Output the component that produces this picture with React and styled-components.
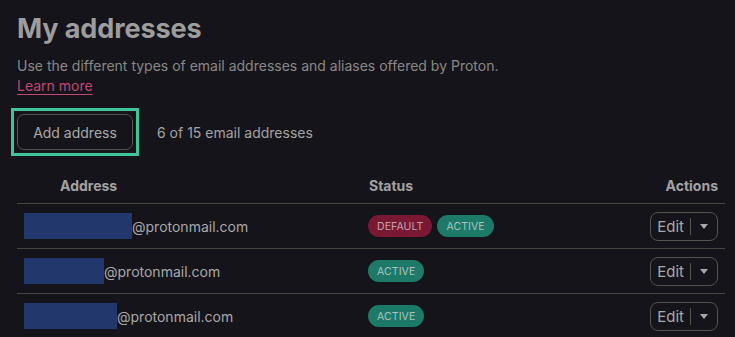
import styled, { createGlobalStyle } from 'styled-components';

const GlobalStyle = createGlobalStyle`
	html, body {
		margin: 0;
		padding: 0;
		background: #15141a;
	}
	body {
		font-family: Inter, "Noto Sans", sans-serif;
		color: #a6a6a6;
	}
`;

const Page = styled.div`
	padding: 12px 10px 0 17px;
	width: 708px;
`;

const Title = styled.h1`
	margin: 0;
	font-size: 27px;
	line-height: 34px;
	font-weight: 700;
	color: #9d9d9d;
	letter-spacing: -0.1px;
`;

const Intro = styled.p`
	margin: 10px 0 0;
	font-size: 14px;
	line-height: 20px;
	color: #8a8886;
`;

const LearnMore = styled.a`
	color: #c04a73;
	text-decoration: underline;
	text-underline-offset: 3px;
`;

const Toolbar = styled.div`
	display: flex;
	align-items: center;
	gap: 18px;
	margin: 12px 0 0 -6px;
`;

const Highlight = styled.div`
	border: 3px solid #3fc398;
	padding: 3px;
	display: flex;
`;

const Button = styled.button`
	font-family: inherit;
	font-size: 14px;
	color: #a9a9a9;
	background: transparent;
	border: 1px solid #57524a;
	border-radius: 7px;
	width: 116px;
	height: 36px;
	padding: 0;
`;

const Count = styled.span`
	font-size: 14px;
	color: #a3a3a3;
`;

const Table = styled.div`
	margin-top: 21px;
`;

const Row = styled.div`
	display: grid;
	grid-template-columns: 345px 1fr auto;
	align-items: center;
	height: ${(p) => (p.$head ? '26px' : '44px')};
	padding: 0 7px;
	border-bottom: ${(p) => (p.$last ? 'none' : '1px solid #4a463f')};
`;

const Head = styled.div`
	font-size: 14px;
	font-weight: 700;
	color: #a2a2a2;
	padding-left: ${(p) => p.$indent || '0'};
	text-align: ${(p) => p.$align || 'left'};
	align-self: start;
`;

const Email = styled.div`
	display: flex;
	align-items: center;
	font-size: 14px;
	color: #a8a8a8;
`;

const Redact = styled.span`
	display: inline-block;
	height: 26px;
	background: #22386d;
`;

const Badges = styled.div`
	display: flex;
	gap: 5px;
	margin-left: -1px;
`;

const Badge = styled.span`
	display: inline-flex;
	align-items: center;
	height: 22px;
	padding: 0 9px;
	border-radius: 11px;
	font-size: 10.5px;
	letter-spacing: 0.1px;
	background: ${(p) => (p.$kind === 'default' ? '#7a1834' : '#1d7a69')};
	color: ${(p) => (p.$kind === 'default' ? '#c4a3ad' : '#a9c5be')};
`;

const Split = styled.div`
	display: flex;
	align-items: center;
	height: 27px;
	border: 1px solid #57524a;
	border-radius: 8px;
`;

const SplitLabel = styled.span`
	font-size: 15px;
	color: #a9a9a9;
	padding: 0 6px;
	border-right: 1px solid #57524a;
	line-height: 17px;
`;

const Caret = styled.span`
	display: flex;
	align-items: center;
	justify-content: center;
	width: 26px;
`;

const rows = [
	{ w: 108, badges: ['default', 'active'] },
	{ w: 80, badges: ['active'] },
	{ w: 93, badges: ['active'] },
];

const App = () => {
	return (
		<>
			<GlobalStyle />
			<Page>
				<Title>My addresses</Title>
				<Intro>
					Use the different types of email addresses and aliases offered by Proton.
					<br />
					<LearnMore href="#">Learn more</LearnMore>
				</Intro>
				<Toolbar>
					<Highlight>
						<Button>Add address</Button>
					</Highlight>
					<Count>6 of 15 email addresses</Count>
				</Toolbar>
				<Table>
					<Row $head>
						<Head $indent="36px">Address</Head>
						<Head>Status</Head>
						<Head $align="right">Actions</Head>
					</Row>
					{rows.map((r, i) => (
						<Row key={i} $last={i === rows.length - 1}>
							<Email>
								<Redact style={{ width: r.w }} />
								@protonmail.com
							</Email>
							<Badges>
								{r.badges.map((b) => (
									<Badge key={b} $kind={b}>
										{b.toUpperCase()}
									</Badge>
								))}
							</Badges>
							<Split>
								<SplitLabel>Edit</SplitLabel>
								<Caret>
									<svg width="8" height="5" viewBox="0 0 8 5">
										<path d="M0 0h8L4 5z" fill="#a9a9a9" />
									</svg>
								</Caret>
							</Split>
						</Row>
					))}
				</Table>
			</Page>
		</>
	);
};

export default App;
